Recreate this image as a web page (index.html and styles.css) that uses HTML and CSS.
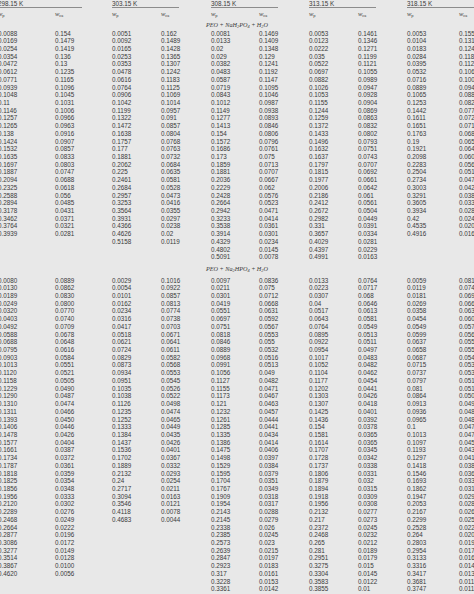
FILE: index.html
```html
<!DOCTYPE html>
<html lang="en">
<head>
<meta charset="utf-8">
<title>Table</title>
<link rel="stylesheet" href="styles.css">
</head>
<body>
<div class="tbl">
  <div class="grp">
    <div class="g g1">298.15 K</div>
    <div class="g">303.15 K</div>
    <div class="g">308.15 K</div>
    <div class="g">313.15 K</div>
    <div class="g">318.15 K</div>
  </div>
  <div class="r sub">
    <span><i>w</i><sub>p</sub></span><span><i>w</i><sub>ca</sub></span>
    <span><i>w</i><sub>p</sub></span><span><i>w</i><sub>ca</sub></span>
    <span><i>w</i><sub>p</sub></span><span><i>w</i><sub>ca</sub></span>
    <span><i>w</i><sub>p</sub></span><span><i>w</i><sub>ca</sub></span>
    <span><i>w</i><sub>p</sub></span><span><i>w</i><sub>ca</sub></span>
  </div>
</div>
<div class="head h1">PEO + NaH<sub>2</sub>PO<sub>4</sub> + H<sub>2</sub>O</div>
<div class="tbl">
<div class="r"><span>0.0088</span><span>0.154</span><span>0.0051</span><span>0.162</span><span>0.0081</span><span>0.1469</span><span>0.0053</span><span>0.1461</span><span>0.0053</span><span>0.1557</span></div>
<div class="r"><span>0.0169</span><span>0.1479</span><span>0.0092</span><span>0.1489</span><span>0.0133</span><span>0.1409</span><span>0.0123</span><span>0.1346</span><span>0.0104</span><span>0.1317</span></div>
<div class="r"><span>0.0254</span><span>0.1419</span><span>0.0165</span><span>0.1428</span><span>0.02</span><span>0.1348</span><span>0.0222</span><span>0.1271</span><span>0.0183</span><span>0.1245</span></div>
<div class="r"><span>0.0354</span><span>0.136</span><span>0.0253</span><span>0.1365</span><span>0.029</span><span>0.129</span><span>0.035</span><span>0.1199</span><span>0.0284</span><span>0.1183</span></div>
<div class="r"><span>0.0472</span><span>0.13</span><span>0.0353</span><span>0.1307</span><span>0.0382</span><span>0.1241</span><span>0.0522</span><span>0.1121</span><span>0.0395</span><span>0.1125</span></div>
<div class="r"><span>0.0612</span><span>0.1235</span><span>0.0478</span><span>0.1242</span><span>0.0483</span><span>0.1192</span><span>0.0697</span><span>0.1055</span><span>0.0532</span><span>0.1066</span></div>
<div class="r"><span>0.0771</span><span>0.1165</span><span>0.0616</span><span>0.1183</span><span>0.0587</span><span>0.1147</span><span>0.0882</span><span>0.0989</span><span>0.0716</span><span>0.1003</span></div>
<div class="r"><span>0.0939</span><span>0.1096</span><span>0.0764</span><span>0.1125</span><span>0.0719</span><span>0.1095</span><span>0.1026</span><span>0.0947</span><span>0.0889</span><span>0.0946</span></div>
<div class="r"><span>0.1048</span><span>0.1045</span><span>0.0906</span><span>0.1069</span><span>0.0843</span><span>0.1046</span><span>0.1053</span><span>0.0928</span><span>0.1065</span><span>0.0889</span></div>
<div class="r"><span>0.11</span><span>0.1031</span><span>0.1042</span><span>0.1014</span><span>0.1012</span><span>0.0987</span><span>0.1155</span><span>0.0904</span><span>0.1253</span><span>0.0828</span></div>
<div class="r"><span>0.1146</span><span>0.1006</span><span>0.1199</span><span>0.0957</span><span>0.1149</span><span>0.0938</span><span>0.1244</span><span>0.0869</span><span>0.1442</span><span>0.0779</span></div>
<div class="r"><span>0.1257</span><span>0.0966</span><span>0.1322</span><span>0.091</span><span>0.1277</span><span>0.0893</span><span>0.1259</span><span>0.0863</span><span>0.1611</span><span>0.0724</span></div>
<div class="r"><span>0.1265</span><span>0.0963</span><span>0.1472</span><span>0.0857</span><span>0.1413</span><span>0.0846</span><span>0.1372</span><span>0.0832</span><span>0.1651</span><span>0.0714</span></div>
<div class="r"><span>0.138</span><span>0.0916</span><span>0.1638</span><span>0.0804</span><span>0.154</span><span>0.0806</span><span>0.1433</span><span>0.0802</span><span>0.1763</span><span>0.0683</span></div>
<div class="r"><span>0.1424</span><span>0.0907</span><span>0.1757</span><span>0.0768</span><span>0.1572</span><span>0.0796</span><span>0.1496</span><span>0.0793</span><span>0.19</span><span>0.0654</span></div>
<div class="r"><span>0.1532</span><span>0.0857</span><span>0.177</span><span>0.0763</span><span>0.1686</span><span>0.0761</span><span>0.1632</span><span>0.0751</span><span>0.1921</span><span>0.0645</span></div>
<div class="r"><span>0.1635</span><span>0.0833</span><span>0.1881</span><span>0.0732</span><span>0.173</span><span>0.075</span><span>0.1637</span><span>0.0743</span><span>0.2098</span><span>0.0604</span></div>
<div class="r"><span>0.1697</span><span>0.0803</span><span>0.2062</span><span>0.0684</span><span>0.1859</span><span>0.0713</span><span>0.1797</span><span>0.0707</span><span>0.2283</span><span>0.0564</span></div>
<div class="r"><span>0.1887</span><span>0.0747</span><span>0.225</span><span>0.0635</span><span>0.1881</span><span>0.0707</span><span>0.1815</span><span>0.0692</span><span>0.2504</span><span>0.0515</span></div>
<div class="r"><span>0.2094</span><span>0.0688</span><span>0.2461</span><span>0.0581</span><span>0.2036</span><span>0.0667</span><span>0.1977</span><span>0.0661</span><span>0.2734</span><span>0.0474</span></div>
<div class="r"><span>0.2325</span><span>0.0618</span><span>0.2684</span><span>0.0528</span><span>0.2229</span><span>0.062</span><span>0.2006</span><span>0.0642</span><span>0.3003</span><span>0.0428</span></div>
<div class="r"><span>0.2588</span><span>0.056</span><span>0.2957</span><span>0.0473</span><span>0.2428</span><span>0.0576</span><span>0.2186</span><span>0.061</span><span>0.3291</span><span>0.0381</span></div>
<div class="r"><span>0.2894</span><span>0.0485</span><span>0.3253</span><span>0.0416</span><span>0.2664</span><span>0.0523</span><span>0.2412</span><span>0.0561</span><span>0.3605</span><span>0.0334</span></div>
<div class="r"><span>0.3178</span><span>0.0431</span><span>0.3564</span><span>0.0355</span><span>0.2942</span><span>0.0471</span><span>0.2672</span><span>0.0504</span><span>0.3934</span><span>0.0289</span></div>
<div class="r"><span>0.3462</span><span>0.0371</span><span>0.3931</span><span>0.0297</span><span>0.3233</span><span>0.0414</span><span>0.2982</span><span>0.0449</span><span>0.42</span><span>0.0244</span></div>
<div class="r"><span>0.3764</span><span>0.0321</span><span>0.4366</span><span>0.0238</span><span>0.3538</span><span>0.0361</span><span>0.331</span><span>0.0391</span><span>0.4535</span><span>0.0209</span></div>
<div class="r"><span>0.3939</span><span>0.0281</span><span>0.4626</span><span>0.02</span><span>0.3914</span><span>0.0301</span><span>0.3657</span><span>0.0334</span><span>0.4916</span><span>0.0168</span></div>
<div class="r"><span></span><span></span><span>0.5158</span><span>0.0119</span><span>0.4329</span><span>0.0234</span><span>0.4029</span><span>0.0281</span><span></span><span></span></div>
<div class="r"><span></span><span></span><span></span><span></span><span>0.4802</span><span>0.0145</span><span>0.4397</span><span>0.0229</span><span></span><span></span></div>
<div class="r"><span></span><span></span><span></span><span></span><span>0.5091</span><span>0.0078</span><span>0.4991</span><span>0.0163</span><span></span><span></span></div>
</div>
<div class="head h2">PEO + Na<sub>2</sub>HPO<sub>4</sub> + H<sub>2</sub>O</div>
<div class="tbl">
<div class="r"><span>0.0080</span><span>0.0889</span><span>0.0029</span><span>0.1016</span><span>0.0097</span><span>0.0836</span><span>0.0133</span><span>0.0764</span><span>0.0059</span><span>0.0818</span></div>
<div class="r"><span>0.0130</span><span>0.0862</span><span>0.0054</span><span>0.0922</span><span>0.0211</span><span>0.075</span><span>0.0223</span><span>0.0717</span><span>0.0119</span><span>0.0743</span></div>
<div class="r"><span>0.0189</span><span>0.0830</span><span>0.0101</span><span>0.0857</span><span>0.0301</span><span>0.0712</span><span>0.0307</span><span>0.068</span><span>0.0181</span><span>0.0695</span></div>
<div class="r"><span>0.0249</span><span>0.0800</span><span>0.0162</span><span>0.0813</span><span>0.0419</span><span>0.0668</span><span>0.04</span><span>0.0646</span><span>0.0269</span><span>0.0662</span></div>
<div class="r"><span>0.0320</span><span>0.0770</span><span>0.0234</span><span>0.0774</span><span>0.0551</span><span>0.0631</span><span>0.0517</span><span>0.0613</span><span>0.0358</span><span>0.063</span></div>
<div class="r"><span>0.0403</span><span>0.0740</span><span>0.0316</span><span>0.0738</span><span>0.0697</span><span>0.0592</span><span>0.0643</span><span>0.0581</span><span>0.0454</span><span>0.0603</span></div>
<div class="r"><span>0.0492</span><span>0.0709</span><span>0.0417</span><span>0.0703</span><span>0.0751</span><span>0.0567</span><span>0.0764</span><span>0.0549</span><span>0.0549</span><span>0.0577</span></div>
<div class="r"><span>0.0588</span><span>0.0678</span><span>0.0518</span><span>0.0671</span><span>0.0818</span><span>0.0553</span><span>0.0895</span><span>0.0513</span><span>0.0599</span><span>0.0564</span></div>
<div class="r"><span>0.0688</span><span>0.0648</span><span>0.0621</span><span>0.0641</span><span>0.0846</span><span>0.055</span><span>0.0922</span><span>0.0511</span><span>0.0637</span><span>0.0555</span></div>
<div class="r"><span>0.0795</span><span>0.0616</span><span>0.0724</span><span>0.0611</span><span>0.0889</span><span>0.0532</span><span>0.0954</span><span>0.0497</span><span>0.0658</span><span>0.0551</span></div>
<div class="r"><span>0.0903</span><span>0.0584</span><span>0.0829</span><span>0.0582</span><span>0.0968</span><span>0.0516</span><span>0.1017</span><span>0.0483</span><span>0.0687</span><span>0.0544</span></div>
<div class="r"><span>0.1013</span><span>0.0551</span><span>0.0873</span><span>0.0568</span><span>0.0991</span><span>0.0513</span><span>0.1052</span><span>0.0482</span><span>0.0715</span><span>0.0535</span></div>
<div class="r"><span>0.1120</span><span>0.0521</span><span>0.0934</span><span>0.0553</span><span>0.1056</span><span>0.049</span><span>0.1104</span><span>0.0462</span><span>0.0737</span><span>0.0532</span></div>
<div class="r"><span>0.1158</span><span>0.0505</span><span>0.0951</span><span>0.0545</span><span>0.1127</span><span>0.0482</span><span>0.1177</span><span>0.0454</span><span>0.0797</span><span>0.0519</span></div>
<div class="r"><span>0.1229</span><span>0.0490</span><span>0.1035</span><span>0.0526</span><span>0.1155</span><span>0.0471</span><span>0.1202</span><span>0.0441</span><span>0.081</span><span>0.0516</span></div>
<div class="r"><span>0.1290</span><span>0.0487</span><span>0.1038</span><span>0.0522</span><span>0.1173</span><span>0.0467</span><span>0.1303</span><span>0.0426</span><span>0.0864</span><span>0.0504</span></div>
<div class="r"><span>0.1310</span><span>0.0474</span><span>0.1126</span><span>0.0498</span><span>0.121</span><span>0.0463</span><span>0.1307</span><span>0.0418</span><span>0.0913</span><span>0.0492</span></div>
<div class="r"><span>0.1311</span><span>0.0466</span><span>0.1235</span><span>0.0474</span><span>0.1232</span><span>0.0457</span><span>0.1425</span><span>0.0401</span><span>0.0936</span><span>0.0487</span></div>
<div class="r"><span>0.1393</span><span>0.0450</span><span>0.1252</span><span>0.0465</span><span>0.1261</span><span>0.0444</span><span>0.1436</span><span>0.0392</span><span>0.0965</span><span>0.0481</span></div>
<div class="r"><span>0.1406</span><span>0.0446</span><span>0.1333</span><span>0.0449</span><span>0.1285</span><span>0.0441</span><span>0.154</span><span>0.0378</span><span>0.1</span><span>0.0473</span></div>
<div class="r"><span>0.1478</span><span>0.0426</span><span>0.1384</span><span>0.0435</span><span>0.1335</span><span>0.0434</span><span>0.1581</span><span>0.0365</span><span>0.1013</span><span>0.0471</span></div>
<div class="r"><span>0.1577</span><span>0.0404</span><span>0.1437</span><span>0.0426</span><span>0.1386</span><span>0.0414</span><span>0.1614</span><span>0.0365</span><span>0.1097</span><span>0.0451</span></div>
<div class="r"><span>0.1661</span><span>0.0387</span><span>0.1536</span><span>0.0401</span><span>0.1475</span><span>0.0406</span><span>0.1707</span><span>0.0345</span><span>0.1193</span><span>0.0432</span></div>
<div class="r"><span>0.1734</span><span>0.0372</span><span>0.1702</span><span>0.0367</span><span>0.1498</span><span>0.0397</span><span>0.1728</span><span>0.0342</span><span>0.1297</span><span>0.0411</span></div>
<div class="r"><span>0.1787</span><span>0.0361</span><span>0.1889</span><span>0.0332</span><span>0.1529</span><span>0.0384</span><span>0.1737</span><span>0.0338</span><span>0.1418</span><span>0.0387</span></div>
<div class="r"><span>0.1818</span><span>0.0359</span><span>0.2132</span><span>0.0293</span><span>0.1595</span><span>0.0379</span><span>0.1806</span><span>0.0331</span><span>0.1546</span><span>0.0364</span></div>
<div class="r"><span>0.1825</span><span>0.0354</span><span>0.24</span><span>0.0254</span><span>0.1704</span><span>0.0351</span><span>0.1879</span><span>0.032</span><span>0.1693</span><span>0.0339</span></div>
<div class="r"><span>0.1856</span><span>0.0348</span><span>0.2717</span><span>0.0211</span><span>0.1767</span><span>0.0349</span><span>0.1894</span><span>0.0315</span><span>0.1862</span><span>0.0317</span></div>
<div class="r"><span>0.1956</span><span>0.0333</span><span>0.3094</span><span>0.0163</span><span>0.1909</span><span>0.0318</span><span>0.1918</span><span>0.0309</span><span>0.1947</span><span>0.0293</span></div>
<div class="r"><span>0.2120</span><span>0.0302</span><span>0.3546</span><span>0.0121</span><span>0.1954</span><span>0.0317</span><span>0.1956</span><span>0.0308</span><span>0.2053</span><span>0.0285</span></div>
<div class="r"><span>0.2289</span><span>0.0276</span><span>0.4118</span><span>0.0078</span><span>0.2143</span><span>0.0288</span><span>0.2132</span><span>0.0277</span><span>0.2167</span><span>0.0263</span></div>
<div class="r"><span>0.2468</span><span>0.0249</span><span>0.4683</span><span>0.0044</span><span>0.2145</span><span>0.0279</span><span>0.217</span><span>0.0273</span><span>0.2299</span><span>0.0257</span></div>
<div class="r"><span>0.2664</span><span>0.0222</span><span></span><span></span><span>0.2338</span><span>0.026</span><span>0.2372</span><span>0.0245</span><span>0.2528</span><span>0.0225</span></div>
<div class="r"><span>0.2877</span><span>0.0196</span><span></span><span></span><span>0.2385</span><span>0.0245</span><span>0.2468</span><span>0.0232</span><span>0.264</span><span>0.0208</span></div>
<div class="r"><span>0.3086</span><span>0.0172</span><span></span><span></span><span>0.2573</span><span>0.023</span><span>0.265</span><span>0.0212</span><span>0.2803</span><span>0.0196</span></div>
<div class="r"><span>0.3277</span><span>0.0149</span><span></span><span></span><span>0.2639</span><span>0.0215</span><span>0.281</span><span>0.0189</span><span>0.2954</span><span>0.0176</span></div>
<div class="r"><span>0.3514</span><span>0.0128</span><span></span><span></span><span>0.2847</span><span>0.0197</span><span>0.2951</span><span>0.0179</span><span>0.3133</span><span>0.0164</span></div>
<div class="r"><span>0.3867</span><span>0.0100</span><span></span><span></span><span>0.2923</span><span>0.0183</span><span>0.3275</span><span>0.015</span><span>0.3316</span><span>0.0146</span></div>
<div class="r"><span>0.4620</span><span>0.0056</span><span></span><span></span><span>0.317</span><span>0.0161</span><span>0.3304</span><span>0.0145</span><span>0.3417</span><span>0.0139</span></div>
<div class="r"><span></span><span></span><span></span><span></span><span>0.3228</span><span>0.0153</span><span>0.3583</span><span>0.0122</span><span>0.3681</span><span>0.0118</span></div>
<div class="r"><span></span><span></span><span></span><span></span><span>0.3361</span><span>0.0142</span><span>0.3855</span><span>0.01</span><span>0.3747</span><span>0.0111</span></div>
</div>
</body>
</html>
```
FILE: styles.css
```css
html, body {
  margin: 0;
  padding: 0;
}
body {
  width: 474px;
  height: 594px;
  overflow: hidden;
  background: #e8e8e8;
  color: #3a3a3a;
  font-family: "Liberation Sans", Arial, sans-serif;
  font-size: 6.3px;
}
.tbl {
  margin-left: -2px;
  width: 530px;
}
.grp {
  display: grid;
  grid-template-columns: 114px 99px 98px 98px 112px;
  height: 8px;
}
.g {
  width: 67px;
  height: 7px;
  line-height: 7px;
  border-bottom: 1px solid #8c8c8c;
  white-space: nowrap;
}
.g1 {
  width: 84px;
}
.r {
  display: grid;
  grid-template-columns: 57px 57px 49px 50px 48px 50px 49px 49px 52px 60px;
  height: 7.72px;
  line-height: 7.72px;
  white-space: nowrap;
}
.r.sub {
  height: 12px;
  line-height: 12px;
  font-family: "Liberation Serif", "Times New Roman", serif;
  font-size: 6.5px;
}
.sub i {
  font-style: italic;
}
sub {
  font-size: 0.7em;
  line-height: 0;
  vertical-align: -0.25em;
}
.head {
  font-family: "Liberation Serif", "Times New Roman", serif;
  font-style: italic;
  font-size: 6.2px;
  text-align: center;
  white-space: nowrap;
}
.h1 {
  height: 9.5px;
  line-height: 9.5px;
}
.h2 {
  height: 15.5px;
  line-height: 15.5px;
}
```
